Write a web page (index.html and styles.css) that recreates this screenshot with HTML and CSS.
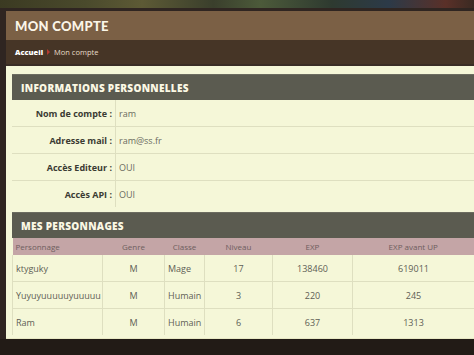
FILE: index.html
```html
<!DOCTYPE html>
<html lang="fr">
<head>
<meta charset="utf-8" />
<title>Mon compte</title>
<link rel="stylesheet" href="styles.css">
</head>
<body>

<div class="banner"></div>

<div id="wrap">
	<h1 class="page-title">MON COMPTE</h1>
	<div class="breadcrumb">
		<a href="#">Accueil</a>
		<span class="sep"></span>
		<span class="current">Mon compte</span>
	</div>

	<div class="content">
		<h2 class="block-title">INFORMATIONS PERSONNELLES</h2>
		<table class="infos">
			<tr><th>Nom de compte :</th><td>ram</td></tr>
			<tr><th>Adresse mail :</th><td>ram@ss.fr</td></tr>
			<tr><th>Accès Editeur :</th><td>OUI</td></tr>
			<tr><th>Accès API :</th><td>OUI</td></tr>
		</table>

		<h2 class="block-title second">MES PERSONNAGES</h2>
		<table class="persos">
			<colgroup>
				<col class="c-nom" /><col class="c-genre" /><col class="c-classe" />
				<col class="c-niveau" /><col class="c-exp" /><col />
			</colgroup>
			<thead>
				<tr>
					<th class="left">Personnage</th>
					<th>Genre</th>
					<th>Classe</th>
					<th>Niveau</th>
					<th>EXP</th>
					<th>EXP avant UP</th>
				</tr>
			</thead>
			<tbody>
				<tr><td class="left">ktyguky</td><td>M</td><td class="left">Mage</td><td>17</td><td>138460</td><td>619011</td></tr>
				<tr><td class="left">Yuyuyuuuuuyuuuuu</td><td>M</td><td class="left">Humain</td><td>3</td><td>220</td><td>245</td></tr>
				<tr><td class="left">Ram</td><td>M</td><td class="left">Humain</td><td>6</td><td>637</td><td>1313</td></tr>
			</tbody>
		</table>
	</div>
</div>

<div class="footer"></div>

</body>
</html>
```

FILE: styles.css
```css
html, body {
	margin:0;
	padding:0;
}
body {
	background:#2f2521;
	font-family:"Open Sans", "Liberation Sans", sans-serif;
	width:474px;
	height:355px;
	overflow:hidden;
}
.banner {
	height:8px;
	background:linear-gradient(90deg, #3b3a22 0%, #4a4a2c 18%, #5d5a35 30%, #3a3f2c 45%, #4c5a3a 55%, #2e3a30 70%, #2c3a48 82%, #5a3028 94%, #3a2a22 100%);
}
#wrap {
	padding:3px 0 0 6px;
	background:#2f2521;
}
.page-title {
	margin:0;
	height:29px;
	line-height:30px;
	padding-left:9px;
	background:#7b6045;
	color:#fbf6e8;
	font-family:Lato, "Open Sans", sans-serif;
	font-size:13px;
	font-weight:900;
	letter-spacing:0.3px;
}
.breadcrumb {
	height:24px;
	line-height:24px;
	padding-left:9px;
	background:#463526;
	font-size:7.5px;
	color:#e6dcc8;
	display:flex;
	align-items:center;
	gap:4px;
	border-bottom:2px solid #3a2d25;
}
.breadcrumb a {
	color:#fff;
	font-weight:800;
	text-decoration:none;
}
.breadcrumb .sep {
	width:0;
	height:0;
	border-left:3px solid #b23a2e;
	border-top:3px solid transparent;
	border-bottom:3px solid transparent;
}
.content {
	background:#f5f7d8;
	padding:8px 0 3px 6px;
	border-bottom:1px solid #e8e8c4;
}
.block-title {
	margin:0;
	height:26px;
	line-height:26px;
	padding-left:9px;
	background:#5b5b50;
	border-top:1px solid #6c6c60;
	box-sizing:border-box;
	color:#fbf8e4;
	font-size:10px;
	font-weight:800;
	letter-spacing:0.3px;
}
.block-title.second {
	margin-top:5px;
}
table {
	border-collapse:collapse;
	width:100%;
}
.infos th, .infos td {
	height:26px;
	border-bottom:1px solid #dedfc0;
	font-size:9px;
	padding:0;
}
.infos tr:last-child th, .infos tr:last-child td {
	border-bottom:none;
}
.infos th {
	width:100px;
	text-align:right;
	padding-right:3px;
	color:#3b3b33;
	font-weight:700;
	border-right:1px solid #dedfc0;
}
.infos td {
	padding-left:3px;
	color:#6a6a60;
}
.persos {
	table-layout:fixed;
}
.persos .c-nom { width:90px; }
.persos .c-genre { width:62px; }
.persos .c-classe { width:40px; }
.persos .c-niveau { width:68px; }
.persos .c-exp { width:80px; }
.persos th {
	height:17px;
	padding:0;
	background:#c4a5a6;
	color:#6e5e5e;
	font-size:8px;
	font-weight:400;
	text-align:center;
}
.persos td {
	height:26px;
	padding:0;
	font-size:9px;
	color:#5e5e55;
	text-align:center;
	border-bottom:1px solid #dedfc0;
	border-left:1px solid #dedfc0;
	white-space:nowrap;
	overflow:hidden;
}
.persos tbody tr:last-child td {
	border-bottom:none;
}
.persos .left {
	text-align:left;
	padding-left:3px;
}
.footer {
	height:20px;
	background:#221b16;
}
```
